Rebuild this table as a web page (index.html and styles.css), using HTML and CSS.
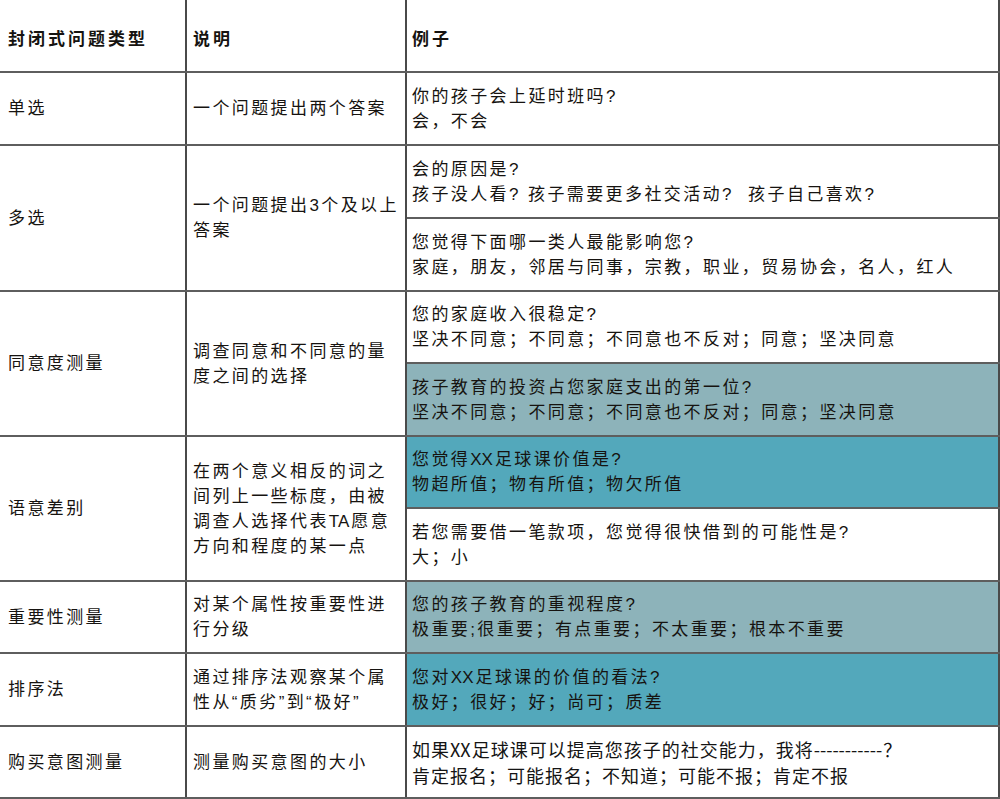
FILE: index.html
```html
<!DOCTYPE html>
<html lang="zh-CN">
<head>
<meta charset="utf-8">
<title>封闭式问题类型</title>
<link rel="stylesheet" href="styles.css">
</head>
<body>
<table class="qtable">
  <colgroup>
    <col class="c-type">
    <col class="c-desc">
    <col class="c-example">
  </colgroup>
  <thead>
    <tr class="h-head">
      <th>封闭式问题类型</th>
      <th>说明</th>
      <th>例子</th>
    </tr>
  </thead>
  <tbody>
    <tr class="h73">
      <td class="type">单选</td>
      <td class="desc">一个问题提出两个答案</td>
      <td class="ex">你的孩子会上延时班吗?<br>会，不会</td>
    </tr>
    <tr class="h73">
      <td class="type" rowspan="2">多选</td>
      <td class="desc" rowspan="2">一个问题提出3个及以上<br>答案</td>
      <td class="ex">会的原因是?<br>孩子没人看? 孩子需要更多社交活动?&nbsp; 孩子自己喜欢?</td>
    </tr>
    <tr class="h73">
      <td class="ex">您觉得下面哪一类人最能影响您?<br>家庭，朋友，邻居与同事，宗教，职业，贸易协会，名人，红人</td>
    </tr>
    <tr class="h72">
      <td class="type" rowspan="2">同意度测量</td>
      <td class="desc" rowspan="2">调查同意和不同意的量<br>度之间的选择</td>
      <td class="ex">您的家庭收入很稳定?<br>坚决不同意；不同意；不同意也不反对；同意；坚决同意</td>
    </tr>
    <tr class="h73">
      <td class="ex tint-gray">孩子教育的投资占您家庭支出的第一位?<br>坚决不同意；不同意；不同意也不反对；同意；坚决同意</td>
    </tr>
    <tr class="h72">
      <td class="type" rowspan="2">语意差别</td>
      <td class="desc" rowspan="2">在两个意义相反的词之<br>间列上一些标度，由被<br>调查人选择代表<span class="tight">TA</span>愿意<br>方向和程度的某一点</td>
      <td class="ex tint-teal">您觉得<span class="tight">XX</span>足球课价值是?<br>物超所值；物有所值；物欠所值</td>
    </tr>
    <tr class="h73">
      <td class="ex">若您需要借一笔款项，您觉得很快借到的可能性是?<br>大；小</td>
    </tr>
    <tr class="h72">
      <td class="type">重要性测量</td>
      <td class="desc">对某个属性按重要性进<br>行分级</td>
      <td class="ex tint-gray">您的孩子教育的重视程度?<br>极重要;很重要；有点重要；不太重要；根本不重要</td>
    </tr>
    <tr class="h73">
      <td class="type">排序法</td>
      <td class="desc">通过排序法观察某个属<br>性从“质劣”到“极好”</td>
      <td class="ex tint-teal">您对<span class="tight">XX</span>足球课的价值的看法?<br>极好；很好；好；尚可；质差</td>
    </tr>
    <tr class="h72">
      <td class="type">购买意图测量</td>
      <td class="desc">测量购买意图的大小</td>
      <td class="ex plain">如果<span class="tight">XX</span>足球课可以提高您孩子的社交能力，我将<span class="tight">-----------</span>？<br>肯定报名；可能报名；不知道；可能不报；肯定不报</td>
    </tr>
  </tbody>
</table>
</body>
</html>
```

FILE: styles.css
```css
html, body {
  margin: 0;
  padding: 0;
  background: #ffffff;
}

.qtable {
  border-collapse: collapse;
  table-layout: fixed;
  width: 999px;
  font-family: "Liberation Sans", "Noto Sans CJK SC", sans-serif;
  font-size: 17px;
  line-height: 25px;
  letter-spacing: 2.4px;
  color: #161310;
}

.c-type { width: 186px; }
.c-desc { width: 220px; }
.c-example { width: 593px; }

.qtable th,
.qtable td {
  border-right: 2px solid #4a4a4a;
  border-bottom: 2px solid #5e5e5e;
  vertical-align: middle;
  text-align: left;
  padding: 0 4px 0 6px;
  white-space: nowrap;
  overflow: hidden;
}

.qtable th {
  font-weight: 700;
  letter-spacing: 3px;
  padding-top: 8px;
}

.qtable th:first-child,
.qtable td.type {
  padding-left: 8px;
}

.qtable td.ex,
.qtable th:last-child {
  padding-left: 5px;
}

.h-head { height: 72px; }
.h72 { height: 72px; }
.h73 { height: 73px; }

.tint-gray { background: #8db3ba; }
.tint-teal { background: #53a8bb; }

.tight {
  letter-spacing: 0;
  margin-right: 2px;
}

.qtable td.plain {
  font-family: "Noto Sans CJK SC", sans-serif;
  font-size: 18px;
  letter-spacing: 1px;
  line-height: 26px;
  color: #141414;
}

.qtable td.plain .tight {
  margin-right: 1px;
}
```
